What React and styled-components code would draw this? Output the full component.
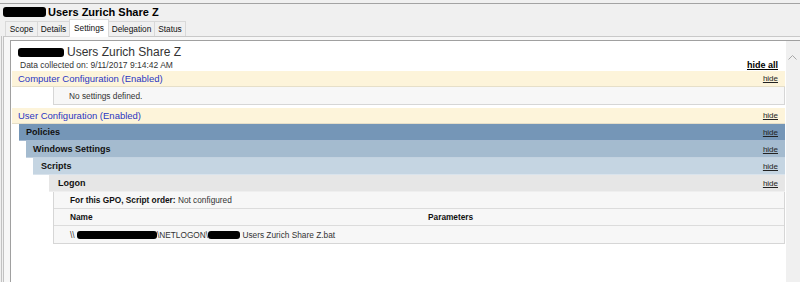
import styled, { createGlobalStyle } from 'styled-components';

// GPMC report view: title, tab strip, and the Settings tab with the HTML report panel.

const TABS = [
  { key: 'scope', label: 'Scope', w: 33 },
  { key: 'details', label: 'Details', w: 33 },
  { key: 'settings', label: 'Settings', w: 40 },
  { key: 'delegation', label: 'Delegation', w: 47 },
  { key: 'status', label: 'Status', w: 32 },
];

const HEADINGS = [
  { label: 'Policies', indent: 8, pad: 7, bg: '#7596b7' },
  { label: 'Windows Settings', indent: 15, pad: 7, bg: '#a4bbcf' },
  { label: 'Scripts', indent: 22, pad: 8, bg: '#c5d5e2' },
  { label: 'Logon', indent: 38, pad: 9, bg: '#e6e6e6' },
];

const Global = createGlobalStyle`
  html, body {
    margin: 0;
    padding: 0;
    background: #f0f0f0;
  }
  body {
    font-family: "Liberation Sans", Arial, sans-serif;
    color: #000;
  }
`;

const Window = styled.div`
  width: 800px;
  height: 282px;
  overflow: hidden;
  display: flex;
  flex-direction: column;
  box-sizing: border-box;
  padding-top: 3px;
`;

const TitleBar = styled.div`
  border-top: 1px solid #a3a3a3;
  height: 16px;
  display: flex;
  align-items: center;
  gap: 2px;
  padding-left: 3px;
  font-size: 11px;
  font-weight: bold;
`;

const Redact = styled.span`
  display: inline-block;
  width: ${({ $w }) => $w}px;
  height: ${({ $h }) => $h}px;
  background: #000;
  border-radius: 3px;
  flex-shrink: 0;
`;

const TabStrip = styled.div`
  height: 16px;
  display: flex;
  align-items: flex-end;
  padding-left: 6px;
  position: relative;
  z-index: 1;
`;

const Tab = styled.div`
  box-sizing: border-box;
  width: ${({ $w }) => $w}px;
  height: ${({ $active }) => ($active ? 18 : 15)}px;
  margin-left: -1px;
  margin-bottom: ${({ $active }) => ($active ? -1 : 0)}px;
  display: flex;
  align-items: center;
  justify-content: center;
  border: 1px solid #d9d9d9;
  border-bottom: none;
  background: ${({ $active }) => ($active ? '#fff' : '#f0f0f0')};
  font-size: 8.3px;
  color: #111;
  padding-bottom: ${({ $active }) => ($active ? 2 : 0)}px;
`;

const TabPage = styled.div`
  flex: 1;
  display: flex;
  margin-left: 1px;
  padding-left: 1px;
  border-left: 1px solid #c2c2c2;
  min-height: 0;
`;

const PageBody = styled.div`
  flex: 1;
  display: flex;
  padding: 3px 0 0 6px;
  border-left: 1px solid #c2c2c2;
  border-top: 1px solid #c9c9c9;
  background: #f7f7f7;
  min-height: 0;
`;

const Panel = styled.div`
  flex: 1;
  display: flex;
  background: #fff;
  border-left: 1px solid #a0a0a0;
  border-top: 1px solid #a0a0a0;
`;

const Report = styled.div`
  flex: 1;
  display: flex;
  flex-direction: column;
`;

const Scrollbar = styled.div`
  width: 14px;
  flex-shrink: 0;
  background: #f0f0f0;
  padding: 13px 0 0 2px;
  box-sizing: border-box;

  svg {
    display: block;
  }
`;

const Header = styled.div`
  display: flex;
  align-items: center;
  gap: 3px;
  height: 14px;
  padding: 4px 0 0 7px;
  font-size: 12px;
  color: #333;
`;

const MetaRow = styled.div`
  display: flex;
  justify-content: space-between;
  align-items: flex-end;
  height: 11px;
  padding: 0 8px 0 9px;
  margin-bottom: 1px;
`;

const Meta = styled.span`
  font-size: 8.5px;
  color: #333;
  line-height: 10px;
`;

const HideAll = styled.span`
  font-size: 9px;
  font-weight: bold;
  text-decoration: underline;
  line-height: 10px;
`;

const Band = styled.div`
  box-sizing: border-box;
  height: ${({ $h }) => $h}px;
  margin: 0 1px 0 ${({ $indent }) => $indent}px;
  display: flex;
  align-items: center;
  justify-content: space-between;
  padding: 0 7px 0 ${({ $pad }) => $pad}px;
  background: ${({ $bg }) => $bg};
  border-bottom: 1px solid ${({ $line }) => $line};
  margin-top: ${({ $gap }) => $gap || 0}px;
`;

const BandTitle = styled.span`
  font-size: 9.5px;
  color: #2b36c2;
`;

const HeadingTitle = styled.span`
  font-size: 9px;
  font-weight: bold;
  color: #111;
`;

const Hide = styled.span`
  font-size: 8px;
  color: #222;
  text-decoration: underline;
`;

const Box = styled.div`
  margin: 0 1px 0 42px;
  background: #f7f7f7;
  border: 1px solid #d6d6d6;
  border-top: none;
`;

const BoxRow = styled.div`
  box-sizing: border-box;
  height: 17px;
  display: grid;
  grid-template-columns: ${({ $cols }) => $cols || '1fr'};
  align-items: center;
  padding-left: ${({ $pad }) => $pad}px;
  font-size: 8.3px;
  color: #333;
  border-bottom: 1px solid #dcdcdc;

  &:last-child {
    border-bottom: none;
  }

  b {
    color: #111;
  }
`;

const Path = styled.span`
  display: flex;
  align-items: center;
  white-space: pre;
`;

function Heading({ item }) {
  return (
    <Band $h={17} $indent={item.indent} $pad={item.pad} $bg={item.bg} $line="rgba(255,255,255,0.35)">
      <HeadingTitle>{item.label}</HeadingTitle>
      <Hide>hide</Hide>
    </Band>
  );
}

export default function App() {
  return (
    <Window>
      <Global />
      <TitleBar>
        <Redact $w={43} $h={10} />
        Users Zurich Share Z
      </TitleBar>
      <TabStrip>
        {TABS.map((tab) => (
          <Tab key={tab.key} $w={tab.w} $active={tab.key === 'settings'}>
            {tab.label}
          </Tab>
        ))}
      </TabStrip>
      <TabPage>
        <PageBody>
          <Panel>
            <Report>
              <Header>
                <Redact $w={46} $h={9} />
                Users Zurich Share Z
              </Header>
              <MetaRow>
                <Meta>Data collected on: 9/11/2017 9:14:42 AM</Meta>
                <HideAll>hide all</HideAll>
              </MetaRow>

              <Band $h={16} $indent={1} $pad={6} $bg="#fdf4da" $line="#e6dfc9">
                <BandTitle>Computer Configuration (Enabled)</BandTitle>
                <Hide>hide</Hide>
              </Band>
              <Box>
                <BoxRow $pad={15}>No settings defined.</BoxRow>
              </Box>

              <Band $h={16} $indent={1} $pad={6} $bg="#fdf4da" $line="#e6dfc9" $gap={3}>
                <BandTitle>User Configuration (Enabled)</BandTitle>
                <Hide>hide</Hide>
              </Band>
              {HEADINGS.map((h) => (
                <Heading key={h.label} item={h} />
              ))}
              <Box>
                <BoxRow $pad={16}>
                  <span>
                    <b>For this GPO, Script order:</b> Not configured
                  </span>
                </BoxRow>
                <BoxRow $pad={16} $cols="358px 1fr">
                  <b>Name</b>
                  <b>Parameters</b>
                </BoxRow>
                <BoxRow $pad={16}>
                  <Path>
                    {'\\\\ '}
                    <Redact $w={80} $h={8} />
                    {'\\NETLOGON\\'}
                    <Redact $w={32} $h={8} />
                    {' Users Zurich Share Z.bat'}
                  </Path>
                </BoxRow>
              </Box>
            </Report>
            <Scrollbar>
              <svg width="9" height="6" viewBox="0 0 9 6">
                <path d="M0.5 5.5 L4.5 1.5 L8.5 5.5" fill="none" stroke="#a8a8a8" strokeWidth="1" />
              </svg>
            </Scrollbar>
          </Panel>
        </PageBody>
      </TabPage>
    </Window>
  );
}
